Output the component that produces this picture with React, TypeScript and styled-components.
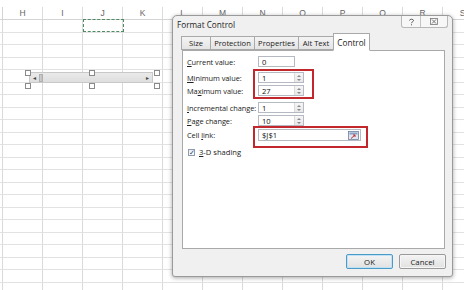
import styled, { createGlobalStyle } from "styled-components";

const GlobalStyle = createGlobalStyle`
  html, body {
    margin: 0;
    padding: 0;
    width: 464px;
    height: 290px;
    overflow: hidden;
    background: #ffffff;
    font-family: "Open Sans", "Noto Sans", sans-serif;
  }
`;

const COLS = ["H", "I", "J", "K", "L", "M", "N", "O", "P", "Q", "R", "S"];
const ROWS = 22;

function App() {
  return (
    <>
      <GlobalStyle />
      <Screen>
        <TopStrip />
        <Header>
          <RowHead />
          {COLS.map((c) => (
            <ColHead key={c}>{c}</ColHead>
          ))}
        </Header>
        <Grid>
          {Array.from({ length: ROWS * (COLS.length + 1) }).map((_, i) => (
            <Cell key={i} />
          ))}
        </Grid>

        <Marquee />

        <ScrollControl>
          <Handle style={{ left: -2, top: -2 }} />
          <Handle style={{ left: 62, top: -2 }} />
          <Handle style={{ left: 127, top: -2 }} />
          <Handle style={{ left: -2, top: 11 }} />
          <Handle style={{ left: 62, top: 11 }} />
          <Handle style={{ left: 127, top: 11 }} />
          <Track>
            <Arrow>◂</Arrow>
            <Thumb />
            <Spacer />
            <Arrow>▸</Arrow>
          </Track>
        </ScrollControl>

        <Dialog>
          <TitleBar>
            <Title>Format Control</Title>
            <Caption>
              <CapBtn>
                <svg width="7" height="8" viewBox="0 0 7 8">
                  <path
                    d="M1.5 2.5 C1.5 0.8 5.5 0.8 5.5 2.5 C5.5 3.8 3.5 3.8 3.5 5.2"
                    fill="none"
                    stroke="#555"
                    strokeWidth="1"
                  />
                  <rect x="3" y="6.3" width="1" height="1" fill="#555" />
                </svg>
              </CapBtn>
              <CapBtn $wide>
                <svg width="8" height="7" viewBox="0 0 8 7">
                  <rect x="0.5" y="0.5" width="7" height="6" fill="none" stroke="#777" strokeWidth="0.8" />
                  <path d="M2 1.5 L6 5.5 M6 1.5 L2 5.5" stroke="#666" strokeWidth="0.9" />
                </svg>
              </CapBtn>
            </Caption>
          </TitleBar>

          <Tabs>
            <Tab $w={30}>Size</Tab>
            <Tab $w={45}>Protection</Tab>
            <Tab $w={45}>Properties</Tab>
            <Tab $w={36}>Alt Text</Tab>
            <Tab $w={37} $active>
              Control
            </Tab>
          </Tabs>

          <Panel>
            <Field $mt={-1}>
              <Label>
                <u>C</u>urrent value:
              </Label>
              <Input $w={37}>0</Input>
            </Field>
            <Field $mt={5}>
              <Label>
                <u>M</u>inimum value:
              </Label>
              <Input $w={46}>
                1<Spin />
              </Input>
            </Field>
            <Field $mt={2}>
              <Label>
                Ma<u>x</u>imum value:
              </Label>
              <Input $w={46}>
                27
                <Spin />
              </Input>
            </Field>
            <Field $mt={6}>
              <Label>
                <u>I</u>ncremental change:
              </Label>
              <Input $w={46}>
                1<Spin />
              </Input>
            </Field>
            <Field $mt={2}>
              <Label>
                <u>P</u>age change:
              </Label>
              <Input $w={46}>
                10
                <Spin />
              </Input>
            </Field>
            <Field $mt={3}>
              <Label>
                Cell <u>l</u>ink:
              </Label>
              <Input $w={103} $h={12}>
                $J$1
                <RefBtn>
                  <svg width="11" height="9" viewBox="0 0 11 9">
                    <rect x="0.5" y="0.5" width="10" height="8" fill="#dfe6f2" stroke="#6d7f9c" strokeWidth="0.8" />
                    <rect x="1.5" y="1.5" width="8" height="2" fill="#8aa0c4" />
                    <path d="M3 7.5 L7 4 M5 4 L7 4 L7 6" fill="none" stroke="#c0302a" strokeWidth="1" />
                  </svg>
                </RefBtn>
              </Input>
            </Field>
            <CheckRow>
              <Check>✓</Check>
              <span>
                <u>3</u>-D shading
              </span>
            </CheckRow>

            <Mark style={{ left: 70, top: 18, width: 57, height: 26 }} />
            <Mark style={{ left: 70, top: 75, width: 111, height: 18 }} />
          </Panel>

          <Buttons>
            <Button $default>OK</Button>
            <Button>Cancel</Button>
          </Buttons>
        </Dialog>
      </Screen>
    </>
  );
}

export default App;

const Screen = styled.div`
  position: relative;
  width: 464px;
  height: 290px;
  overflow: hidden;
  background: #ffffff;
`;

const TopStrip = styled.div`
  height: 7px;
  background: #ffffff;
`;

const Header = styled.div`
  display: flex;
  height: 12px;
  border-bottom: 1px solid #d4d4d4;
`;

const RowHead = styled.div`
  width: 3px;
  flex: none;
  border-right: 1px solid #d4d4d4;
  box-sizing: border-box;
`;

const ColHead = styled.div`
  width: 40px;
  flex: none;
  box-sizing: border-box;
  border-right: 1px solid #dcdcdc;
  display: flex;
  align-items: center;
  justify-content: center;
  font-size: 8.5px;
  color: #666;
  font-family: "Liberation Sans", sans-serif;
`;

const Grid = styled.div`
  display: grid;
  grid-template-columns: 3px repeat(12, 40px);
  grid-auto-rows: 12.5px;
`;

const Cell = styled.div`
  box-sizing: border-box;
  border-right: 1px solid #dadada;
  border-bottom: 1px solid #e2e2e2;
`;

const Marquee = styled.div`
  position: absolute;
  left: 83px;
  top: 19px;
  width: 41px;
  height: 13px;
  box-sizing: border-box;
  border: 1px dashed #4f8a62;
`;

const ScrollControl = styled.div`
  position: absolute;
  left: 27px;
  top: 72px;
  width: 128px;
  height: 11px;
`;

const Handle = styled.div`
  position: absolute;
  width: 4px;
  height: 4px;
  background: #fff;
  border: 1px solid #8a8a8a;
  z-index: 2;
`;

const Track = styled.div`
  box-sizing: border-box;
  height: 100%;
  margin: 0 2px;
  display: flex;
  align-items: center;
  padding: 0 3px;
  gap: 3px;
  background: linear-gradient(#eaeaea, #dedede);
  border: 1px solid #c8c8c8;
`;

const Arrow = styled.span`
  font-size: 6px;
  color: #444;
  line-height: 1;
`;

const Thumb = styled.div`
  width: 4px;
  height: 8px;
  background: linear-gradient(90deg, #d0d0d0, #bdbdbd);
  border: 1px solid #b0b0b0;
  box-sizing: border-box;
`;

const Spacer = styled.div`
  flex: 1;
`;

const Dialog = styled.div`
  position: absolute;
  left: 172px;
  top: 15px;
  width: 281px;
  height: 262px;
  box-sizing: border-box;
  background: #f0f0f0;
  border: 1px solid #9a9a9a;
  border-radius: 5px 5px 3px 3px;
  box-shadow: 0 1px 4px rgba(0, 0, 0, 0.35);
  display: flex;
  flex-direction: column;
  font-size: 8px;
  color: #222;
`;

const TitleBar = styled.div`
  display: flex;
  justify-content: space-between;
  align-items: flex-start;
  height: 17px;
`;

const Title = styled.div`
  padding: 3px 0 0 4px;
  font-size: 8.2px;
  color: #222;
`;

const Caption = styled.div`
  display: flex;
  margin-right: 4px;
  border: 1px solid #b8b8b8;
  border-top: none;
  border-radius: 0 0 3px 3px;
  background: #f7f7f7;
`;

const CapBtn = styled.div<{ $wide?: boolean }>`
  width: ${(p) => (p.$wide ? 26 : 18)}px;
  height: 11px;
  display: flex;
  align-items: center;
  justify-content: center;
  & + & {
    border-left: 1px solid #c4c4c4;
  }
`;

const Tabs = styled.div`
  display: flex;
  align-items: flex-end;
  margin-left: 9px;
  height: 17px;
  position: relative;
  z-index: 1;
`;

const Tab = styled.div<{ $w: number; $active?: boolean }>`
  width: ${(p) => p.$w}px;
  height: ${(p) => (p.$active ? 18 : 14)}px;
  box-sizing: border-box;
  display: flex;
  align-items: center;
  justify-content: center;
  white-space: nowrap;
  border: 1px solid #a9a9a9;
  border-bottom: ${(p) => (p.$active ? "1px solid #fff" : "1px solid #a9a9a9")};
  margin-left: -1px;
  margin-bottom: ${(p) => (p.$active ? -1 : 0)}px;
  background: ${(p) => (p.$active ? "#ffffff" : "linear-gradient(#f4f4f4, #e4e4e4)")};
  font-size: ${(p) => (p.$active ? 8.2 : 7.6)}px;
  color: #222;
`;

const Panel = styled.div`
  position: relative;
  margin: 0 7px 0 9px;
  height: 199px;
  box-sizing: border-box;
  background: #ffffff;
  border: 1px solid #a9a9a9;
  padding: 6px 0 0 4px;
  display: flex;
  flex-direction: column;
`;

const Field = styled.div<{ $mt: number }>`
  display: flex;
  align-items: center;
  margin-top: ${(p) => p.$mt}px;
`;

const Label = styled.div`
  width: 71px;
  flex: none;
  white-space: nowrap;
  font-size: 7.4px;
  letter-spacing: -0.05px;
  color: #222;
`;

const Input = styled.div<{ $w: number; $h?: number }>`
  position: relative;
  width: ${(p) => p.$w}px;
  height: ${(p) => p.$h ?? 11}px;
  box-sizing: border-box;
  border: 1px solid #b5b9c2;
  background: #fff;
  display: flex;
  align-items: center;
  padding-left: 3px;
  font-size: 7.6px;
  color: #111;
`;

const Spin = styled.div`
  position: absolute;
  right: 0;
  top: 0;
  bottom: 0;
  width: 8px;
  border-left: 1px solid #dadada;
  background: linear-gradient(#f6f6f6, #e8e8e8);
  &::before,
  &::after {
    content: "";
    position: absolute;
    left: 2px;
    border-left: 2px solid transparent;
    border-right: 2px solid transparent;
  }
  &::before {
    top: 1.5px;
    border-bottom: 2px solid #888;
  }
  &::after {
    bottom: 1.5px;
    border-top: 2px solid #888;
  }
`;

const RefBtn = styled.div`
  position: absolute;
  right: 1px;
  top: 0;
  bottom: 0;
  display: flex;
  align-items: center;
`;

const CheckRow = styled.div`
  display: flex;
  align-items: center;
  gap: 4px;
  margin-top: 6px;
  padding-left: 1px;
  font-size: 7.6px;
`;

const Check = styled.div`
  width: 7px;
  height: 7px;
  box-sizing: border-box;
  border: 1px solid #8e9bb0;
  background: linear-gradient(#e8ecf3, #ffffff);
  display: flex;
  align-items: center;
  justify-content: center;
  font-size: 7px;
  line-height: 1;
  color: #2c3f66;
`;

const Mark = styled.div`
  position: absolute;
  border: 2px solid #c1272d;
`;

const Buttons = styled.div`
  display: flex;
  justify-content: flex-end;
  gap: 6px;
  margin: 5px 6px 0 0;
`;

const Button = styled.div<{ $default?: boolean }>`
  width: 47px;
  height: 15px;
  box-sizing: border-box;
  display: flex;
  align-items: center;
  justify-content: center;
  border-radius: 2px;
  border: 1px solid ${(p) => (p.$default ? "#4a9bc7" : "#9a9a9a")};
  box-shadow: ${(p) => (p.$default ? "inset 0 0 0 1px #bfe3f5" : "inset 0 0 0 1px #f6f6f6")};
  background: linear-gradient(#f4f4f4, #e1e1e1);
  font-size: 7.8px;
  color: #222;
`;
